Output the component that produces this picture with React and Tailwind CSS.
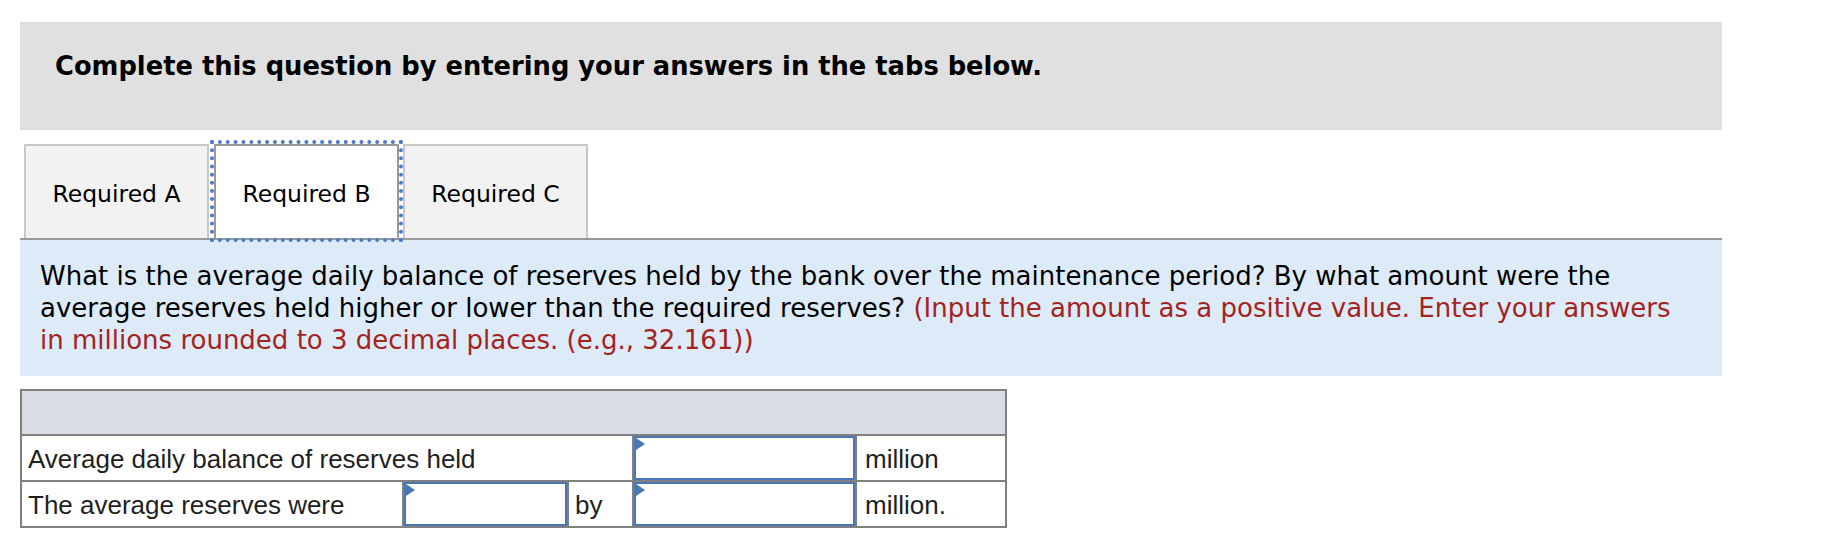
import React from 'react';

function AnswerInput() {
  return (
    <div className="relative h-full w-full">
      <input
        type="text"
        className="h-full w-full border-2 border-[#4a77b4] bg-white px-2 outline-none"
      />
      {/* little blue marker in the corner */}
      <span className="pointer-events-none absolute left-[2px] top-[2px] h-0 w-0 border-y-[6.5px] border-l-[9px] border-y-transparent border-l-[#4a77b4]" />
    </div>
  );
}

function Tab({ label, active }) {
  if (active) {
    return (
      <div className="relative z-10 ml-[5px] flex h-[94px] w-[185px] items-center justify-center border-2 border-b-0 border-[#999999] bg-white pt-[5px] outline-4 outline-dotted outline-[#4a7bc4]">
        {label}
      </div>
    );
  }
  return (
    <div className="flex h-[94px] w-[185px] items-center justify-center border-2 border-b-0 border-[#c8c8c8] bg-[#f2f2f2] pt-[5px]">
      {label}
    </div>
  );
}

export default function App() {
  return (
    <div className="min-h-[536px] bg-white pl-[20px] pt-[22px] text-black">
      <div className="w-[1702px] font-['DejaVu_Sans',Verdana,sans-serif]">
        {/* instructions bar */}
        <div className="h-[108px] bg-[#e0e0e0] pl-[35px] pt-[28px] text-[25.75px] font-bold leading-[32px]">
          Complete this question by entering your answers in the tabs below.
        </div>

        {/* tabs */}
        <div className="mt-[14px] flex pl-[4px] text-[23.5px]">
          <Tab label="Required A" />
          <Tab label="Required B" active />
          <div className="ml-[4px]">
            <Tab label="Required C" />
          </div>
        </div>

        {/* question */}
        <div className="border-t-2 border-[#999999] bg-[#ddebf8] px-[20px] py-[20px] text-[26px] leading-[32px]">
          What is the average daily balance of reserves held by the bank over the maintenance period? By what amount were the
          average reserves held higher or lower than the required reserves?{' '}
          <span className="text-[#a3231f]">
            (Input the amount as a positive value. Enter your answers
            <br />
            in millions rounded to 3 decimal places. (e.g., 32.161))
          </span>
        </div>
      </div>

      {/* answer table */}
      <div className="mt-[13px] w-[987px] border-2 border-[#808080] font-['Liberation_Sans',Arial,sans-serif] text-[26px] text-[#1f1f1f]">
        <div className="h-[45px] border-b-2 border-[#808080] bg-[#d8dde6]" />
        <div className="flex h-[46px] border-b-2 border-[#808080]">
          <div className="flex w-[610px] items-center pl-[6px] pt-[2px]">Average daily balance of reserves held</div>
          <div className="w-[225px] border-x-2 border-[#808080]">
            <AnswerInput />
          </div>
          <div className="flex flex-1 items-center pl-[8px] pt-[2px]">million</div>
        </div>
        <div className="flex h-[44px]">
          <div className="flex w-[380px] items-center pl-[6px] pt-[2px]">The average reserves were</div>
          <div className="w-[167px] border-x-2 border-[#808080]">
            <AnswerInput />
          </div>
          <div className="flex w-[63px] items-center pl-[6px] pt-[2px]">by</div>
          <div className="w-[225px] border-x-2 border-[#808080]">
            <AnswerInput />
          </div>
          <div className="flex flex-1 items-center pl-[8px] pt-[2px]">million.</div>
        </div>
      </div>
    </div>
  );
}
